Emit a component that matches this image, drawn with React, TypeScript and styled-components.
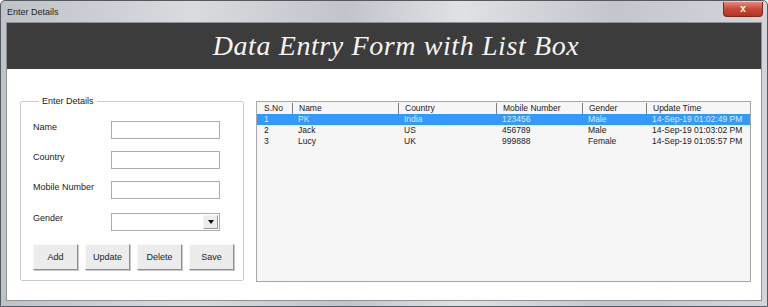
import styled, { createGlobalStyle } from 'styled-components';

const GlobalStyle = createGlobalStyle`
  html, body {
    margin: 0;
    padding: 0;
    background: #ffffff;
  }
  body {
    font-family: 'Liberation Sans', Arial, sans-serif;
  }
`;

const Window = styled.div`
  width: 768px;
  height: 307px;
  box-sizing: border-box;
  display: flex;
  flex-direction: column;
  border: 1px solid #555a60;
  border-radius: 5px 5px 0 0;
  background: linear-gradient(90deg, #bfc3c7 0%, #d9dbdd 25%, #c2c5c8 45%, #dfe1e3 60%, #c4c7ca 80%, #d3d5d8 100%);
  padding: 0 5px 5px 5px;
`;

const TitleBar = styled.div`
  height: 21px;
  display: flex;
  align-items: flex-start;
  justify-content: space-between;
`;

const Caption = styled.span`
  font-size: 9px;
  color: #1e1e1e;
  margin: 6px 0 0 1px;
`;

const CloseButton = styled.div`
  width: 38px;
  height: 14px;
  margin: 1px -1px 0 0;
  border: 1px solid #7a2a22;
  border-top: none;
  border-radius: 0 0 4px 4px;
  background: linear-gradient(180deg, #e38a7c 0%, #c9473a 50%, #b33424 100%);
  color: #ffffff;
  font-size: 10px;
  font-weight: bold;
  display: flex;
  align-items: center;
  justify-content: center;
  line-height: 1;
`;

const Client = styled.div`
  flex: 1;
  display: flex;
  flex-direction: column;
  background: #ffffff;
  border: 1px solid #8e9398;
`;

const Banner = styled.div`
  height: 46px;
  background: #3c3c3c;
  display: flex;
  align-items: center;
  justify-content: center;
  padding-left: 24px;
`;

const BannerTitle = styled.h1`
  margin: 0;
  font-family: 'Liberation Serif', 'DejaVu Serif', serif;
  font-style: italic;
  font-weight: normal;
  font-size: 28px;
  letter-spacing: 0.6px;
  color: #f4f4f4;
`;

const Body = styled.div`
  flex: 1;
  display: flex;
  gap: 12px;
  padding: 32px 10px 0 13px;
  align-items: flex-start;
`;

const GroupBox = styled.fieldset`
  width: 224px;
  min-width: 0;
  height: 185px;
  box-sizing: border-box;
  margin: -5px 0 0 0;
  padding: 15px 8px 0 12px;
  border: 1px solid #c9cdd1;
  border-radius: 2px;
`;

const Legend = styled.legend`
  font-size: 9px;
  color: #222222;
  padding: 0 3px;
  margin-left: 6px;
`;

const FormGrid = styled.div`
  display: grid;
  grid-template-columns: 78px 109px;
  row-gap: 12px;
  align-items: center;
`;

const Label = styled.label`
  font-size: 9px;
  color: #222222;
  margin-top: -6px;
`;

const TextBox = styled.div`
  height: 18px;
  box-sizing: border-box;
  border: 1px solid #a9acb0;
  background: #ffffff;
`;

const ComboBox = styled(TextBox)`
  display: flex;
  justify-content: flex-end;
  margin-top: 2px;
`;

const DropButton = styled.div`
  width: 13px;
  margin: 1px;
  background: #ececec;
  border: 1px solid;
  border-color: #f4f4f4 #9a9a9a #9a9a9a #f4f4f4;
  display: flex;
  align-items: center;
  justify-content: center;
  &::after {
    content: '';
    border-left: 3px solid transparent;
    border-right: 3px solid transparent;
    border-top: 4px solid #111111;
  }
`;

const Buttons = styled.div`
  display: flex;
  gap: 7px;
  margin-top: 13px;
`;

const Button = styled.button`
  width: 45px;
  height: 26px;
  box-sizing: border-box;
  padding: 0;
  font-family: 'Liberation Sans', Arial, sans-serif;
  font-size: 9px;
  color: #222222;
  background: #ececec;
  border: 1px solid;
  border-color: #f8f8f8 #8f8f8f #8f8f8f #f8f8f8;
  box-shadow: 1px 1px 0 #c8c8c8;
`;

const ListBox = styled.div`
  width: 495px;
  height: 181px;
  box-sizing: border-box;
  border: 1px solid #a5a8ab;
  background: #f6f6f6;
  font-size: 8.5px;
  color: #1a1a1a;
`;

const Row = styled.div<{ $selected?: boolean; $header?: boolean }>`
  display: grid;
  grid-template-columns: 35px 106px 98px 86px 64px 1fr;
  height: 11px;
  padding-top: ${({ $header }) => ($header ? '1px' : '0')};
  align-items: center;
  background: ${({ $selected }) => ($selected ? '#3399ff' : 'transparent')};
  color: ${({ $selected }) => ($selected ? '#dcecff' : '#1a1a1a')};
  line-height: 1;
  white-space: nowrap;
`;

const Cell = styled.span<{ $header?: boolean; $first?: boolean }>`
  padding-left: ${({ $first }) => ($first ? '7px' : '6px')};
  height: 100%;
  display: flex;
  align-items: center;
  border-left: ${({ $header, $first }) => ($header && !$first ? '1px solid #7d7d7d' : 'none')};
`;

const columns = ['S.No', 'Name', 'Country', 'Mobile Number', 'Gender', 'Update Time'];

const records = [
  ['1', 'PK', 'India', '123456', 'Male', '14-Sep-19 01:02:49 PM'],
  ['2', 'Jack', 'US', '456789', 'Male', '14-Sep-19 01:03:02 PM'],
  ['3', 'Lucy', 'UK', '999888', 'Female', '14-Sep-19 01:05:57 PM'],
];

export default function App() {
  return (
    <>
      <GlobalStyle />
      <Window>
        <TitleBar>
          <Caption>Enter Details</Caption>
          <CloseButton>x</CloseButton>
        </TitleBar>
        <Client>
          <Banner>
            <BannerTitle>Data Entry Form with List Box</BannerTitle>
          </Banner>
          <Body>
            <GroupBox>
              <Legend>Enter Details</Legend>
              <FormGrid>
                <Label>Name</Label>
                <TextBox />
                <Label>Country</Label>
                <TextBox />
                <Label>Mobile Number</Label>
                <TextBox />
                <Label>Gender</Label>
                <ComboBox>
                  <DropButton />
                </ComboBox>
              </FormGrid>
              <Buttons>
                <Button>Add</Button>
                <Button>Update</Button>
                <Button>Delete</Button>
                <Button>Save</Button>
              </Buttons>
            </GroupBox>

            <ListBox>
              <Row $header>
                {columns.map((col, i) => (
                  <Cell key={col} $header $first={i === 0}>
                    {col}
                  </Cell>
                ))}
              </Row>
              {records.map((rec, r) => (
                <Row key={rec[0]} $selected={r === 0}>
                  {rec.map((val, i) => (
                    <Cell key={i} $first={i === 0}>
                      {val}
                    </Cell>
                  ))}
                </Row>
              ))}
            </ListBox>
          </Body>
        </Client>
      </Window>
    </>
  );
}
